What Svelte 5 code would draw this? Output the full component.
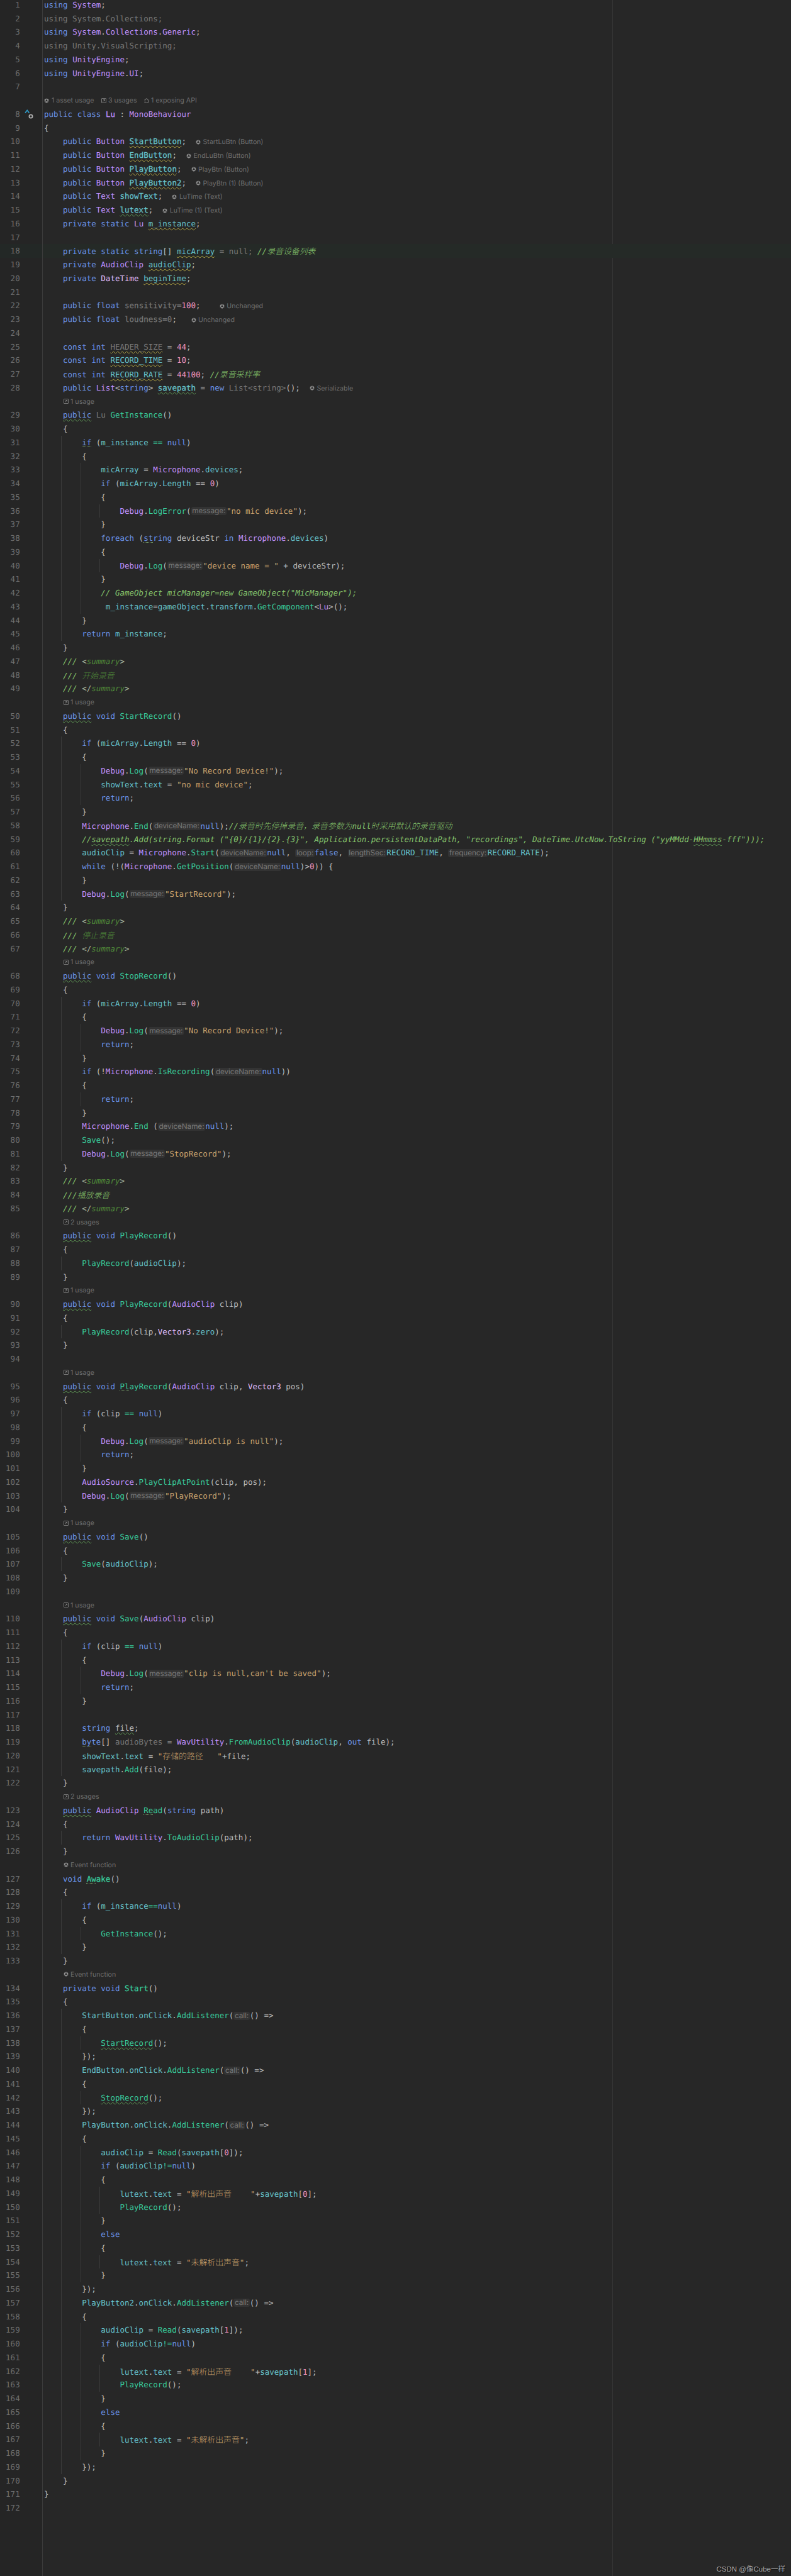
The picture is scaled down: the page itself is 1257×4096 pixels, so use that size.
<script>
  const src = [
`«k:using» «t:System»;`,
`«x:using System.Collections;»`,
`«k:using» «t:System».«t:Collections».«t:Generic»;`,
`«x:using Unity.VisualScripting;»`,
`«k:using» «t:UnityEngine»;`,
`«k:using» «t:UnityEngine».«t:UI»;`,
``,
`@0 u:1 asset usage|r:3 usages|a:1 exposing API`,
`«k:public» «k:class» «t.b:Lu» : «t:MonoBehaviour»`,
`{`,
`    «k:public» «t:Button» «f.b.w:StartButton»;  «u:StartLuBtn (Button)»`,
`    «k:public» «t:Button» «f.b.w:EndButton»;  «u:EndLuBtn (Button)»`,
`    «k:public» «t:Button» «f.b.w:PlayButton»;  «u:PlayBtn (Button)»`,
`    «k:public» «t:Button» «f.b.w:PlayButton2»;  «u:PlayBtn (1) (Button)»`,
`    «k:public» «t:Text» «f.b:showText»;  «u:LuTime (Text)»`,
`    «k:public» «t:Text» «f.b.g:lutext»;  «u:LuTime (1) (Text)»`,
`    «k:private» «k:static» «t:Lu» «f.w:m_instance»;`,
``,
`    «k:private» «k:static» «k:string»[] «f.w:micArray» «x:= null;» «c://录音设备列表»`,
`    «k:private» «t:AudioClip» «f.w:audioClip»;`,
`    «k:private» «T:DateTime» «f.w:beginTime»;`,
``,
`    «k:public» «k:float» «x.b:sensitivity=»«n:100»;    «u:Unchanged»`,
`    «k:public» «k:float» «x.b:loudness=»«x:0»;   «u:Unchanged»`,
``,
`    «k:const» «k:int» «x.w:HEADER_SIZE» = «n:44»;`,
`    «k:const» «k:int» «f.w:RECORD_TIME» = «n:10»;`,
`    «k:const» «k:int» «f.w:RECORD_RATE» = «n:44100»; «c://录音采样率»`,
`    «k:public» «t:List»<«k:string»> «f.b.g:savepath» = «k:new» «x:List<string>»();  «u:Serializable»`,
`@1 r:1 usage`,
`    «k.g:public» «x:Lu» «m:GetInstance»()`,
`    {`,
`        «k.d:if» («f:m_instance» «m:==» «k:null»)`,
`        {`,
`            «f:micArray» = «t:Microphone».«f:devices»;`,
`            «k:if» («f:micArray».«f:Length» == «n:0»)`,
`            {`,
`                «t:Debug».«m:LogError»(«h:message:»«s:"no mic device"»);`,
`            }`,
`            «k:foreach» («k.d:st»«k:ring» deviceStr «k:in» «t:Microphone».«f:devices»)`,
`            {`,
`                «t:Debug».«m:Log»(«h:message:»«s:"device name = "» + deviceStr);`,
`            }`,
`            «c:// GameObject micManager=new GameObject("MicManager");»`,
`             «f:m_instance»=«f:gameObject».«f:transform».«m:GetComponent»<«t:Lu»>();`,
`        }`,
`        «k:return» «f:m_instance»;`,
`    }`,
`    «c:///» «dl:<»«dt:summary»«dl:>»`,
`    «c:///» «dt:开始录音»`,
`    «c:///» «dl:</»«dt:summary»«dl:>»`,
`@1 r:1 usage`,
`    «k.g:public» «k:void» «m:StartRecord»()`,
`    {`,
`        «k:if» («f:micArray».«f:Length» == «n:0»)`,
`        {`,
`            «t:Debug».«m:Log»(«h:message:»«s:"No Record Device!"»);`,
`            «f:showText».«f:text» = «s:"no mic device"»;`,
`            «k:return»;`,
`        }`,
`        «t:Microphone».«m:End»(«h:deviceName:»«k:null»);«c://录音时先停掉录音，录音参数为null时采用默认的录音驱动»`,
`        «c://»«c.g:savepath»«c:.Add(string.Format ("{0}/{1}/{2}.{3}", Application.persistentDataPath, "recordings", DateTime.UtcNow.ToString ("yyMMdd-»«c.g:HHmmss»«c:-fff")));»`,
`        «f:audioClip» = «t:Microphone».«m:Start»(«h:deviceName:»«k:null», «h:loop:»«k:false», «h:lengthSec:»«f:RECORD_TIME», «h:frequency:»«f:RECORD_RATE»);`,
`        «k:while» (!(«t:Microphone».«m:GetPosition»(«h:deviceName:»«k:null»)>«n:0»)) {`,
`        }`,
`        «t:Debug».«m:Log»(«h:message:»«s:"StartRecord"»);`,
`    }`,
`    «c:///» «dl:<»«dt:summary»«dl:>»`,
`    «c:///» «dt:停止录音»`,
`    «c:///» «dl:</»«dt:summary»«dl:>»`,
`@1 r:1 usage`,
`    «k.g:public» «k:void» «m:StopRecord»()`,
`    {`,
`        «k:if» («f:micArray».«f:Length» == «n:0»)`,
`        {`,
`            «t:Debug».«m:Log»(«h:message:»«s:"No Record Device!"»);`,
`            «k:return»;`,
`        }`,
`        «k:if» (!«t:Microphone».«m:IsRecording»(«h:deviceName:»«k:null»))`,
`        {`,
`            «k:return»;`,
`        }`,
`        «t:Microphone».«m:End» («h:deviceName:»«k:null»);`,
`        «m:Save»();`,
`        «t:Debug».«m:Log»(«h:message:»«s:"StopRecord"»);`,
`    }`,
`    «c:///» «dl:<»«dt:summary»«dl:>»`,
`    «c:///播放录音»`,
`    «c:///» «dl:</»«dt:summary»«dl:>»`,
`@1 r:2 usages`,
`    «k.g:public» «k:void» «m:PlayRecord»()`,
`    {`,
`        «m:PlayRecord»(«f:audioClip»);`,
`    }`,
`@1 r:1 usage`,
`    «k.g:public» «k:void» «m:PlayRecord»(«t:AudioClip» clip)`,
`    {`,
`        «m:PlayRecord»(clip,«T:Vector3».«f:zero»);`,
`    }`,
``,
`@1 r:1 usage`,
`    «k.g:public» «k:void» «m.d:Pl»«m:ayRecord»(«t:AudioClip» clip, «T:Vector3» pos)`,
`    {`,
`        «k:if» (clip «m:==» «k:null»)`,
`        {`,
`            «t:Debug».«m:Log»(«h:message:»«s:"audioClip is null"»);`,
`            «k:return»;`,
`        }`,
`        «t:AudioSource».«m:PlayClipAtPoint»(clip, pos);`,
`        «t:Debug».«m:Log»(«h:message:»«s:"PlayRecord"»);`,
`    }`,
`@1 r:1 usage`,
`    «k.g:public» «k:void» «m:Save»()`,
`    {`,
`        «m:Save»(«f:audioClip»);`,
`    }`,
``,
`@1 r:1 usage`,
`    «k.g:public» «k:void» «m:Save»(«t:AudioClip» clip)`,
`    {`,
`        «k:if» (clip «m:==» «k:null»)`,
`        {`,
`            «t:Debug».«m:Log»(«h:message:»«s:"clip is null,can't be saved"»);`,
`            «k:return»;`,
`        }`,
``,
`        «k:string» «pl.g:file»;`,
`        «k.d:by»«k:te»[] «x:audioBytes» = «t:WavUtility».«m:FromAudioClip»(«f:audioClip», «k:out» file);`,
`        «f:showText».«f:text» = «s:"存储的路径   "»+file;`,
`        «f:savepath».«m:Add»(file);`,
`    }`,
`@1 r:2 usages`,
`    «k.g:public» «t:AudioClip» «m.d:Re»«m:ad»(«k:string» path)`,
`    {`,
`        «k:return» «t:WavUtility».«m:ToAudioClip»(path);`,
`    }`,
`@1 u:Event function`,
`    «k:void» «m.b.d:Aw»«m.b:ake»()`,
`    {`,
`        «k:if» («f:m_instance»«m:==»«k:null»)`,
`        {`,
`            «m:GetInstance»();`,
`        }`,
`    }`,
`@1 u:Event function`,
`    «k:private» «k:void» «m.b:Start»()`,
`    {`,
`        «f:StartButton».«f:onClick».«m:AddListener»(«h:call:»() =>`,
`        {`,
`            «m.g:StartRecord»();`,
`        });`,
`        «f:EndButton».«f:onClick».«m:AddListener»(«h:call:»() =>`,
`        {`,
`            «m.g:StopRecord»();`,
`        });`,
`        «f:PlayButton».«f:onClick».«m:AddListener»(«h:call:»() =>`,
`        {`,
`            «f:audioClip» = «m:Read»(«f:savepath»[«n:0»]);`,
`            «k:if» («f:audioClip»«m:!=»«k:null»)`,
`            {`,
`                «f:lutext».«f:text» = «s:"解析出声音    "»+«f:savepath»[«n:0»];`,
`                «m:PlayRecord»();`,
`            }`,
`            «k:else»`,
`            {`,
`                «f:lutext».«f:text» = «s:"未解析出声音"»;`,
`            }`,
`        });`,
`        «f:PlayButton2».«f:onClick».«m:AddListener»(«h:call:»() =>`,
`        {`,
`            «f:audioClip» = «m:Read»(«f:savepath»[«n:1»]);`,
`            «k:if» («f:audioClip»«m:!=»«k:null»)`,
`            {`,
`                «f:lutext».«f:text» = «s:"解析出声音    "»+«f:savepath»[«n:1»];`,
`                «m:PlayRecord»();`,
`            }`,
`            «k:else»`,
`            {`,
`                «f:lutext».«f:text» = «s:"未解析出声音"»;`,
`            }`,
`        });`,
`    }`,
`}`,
``
  ];

  function parse(s) {
    const out = [];
    const re = /«([\w.]+):([^»]*)»/g;
    let last = 0, m;
    while ((m = re.exec(s))) {
      if (m.index > last) out.push({ cls: '', text: s.slice(last, m.index) });
      out.push({ cls: m[1].replace(/\./g, ' '), text: m[2] });
      last = m.index + m[0].length;
    }
    if (last < s.length) out.push({ cls: '', text: s.slice(last) });
    return out.map((t) => ({ ...t, segs: t.text.split(/([\u4e00-\u9fff，]+)/).filter(Boolean) }));
  }
  const isCjk = (x) => /[\u4e00-\u9fff，]/.test(x);

  const guideLeft = (i) => 67.3 + 30.1 * i;

  let num = 0, depth = 0;
  const rows = src.map((s) => {
    if (s.startsWith('@')) {
      const items = s.slice(3).split('|').map((x) => ({ kind: x[0], text: x.slice(2) }));
      return { cv: true, level: +s[1], items, guides: [] };
    }
    num++;
    const toks = parse(s);
    const plain = toks.filter((t) => !t.cls).map((t) => t.text).join('');
    const lead = (plain.match(/^\s*\}/) ? 1 : 0);
    const d = depth - lead;
    depth += (plain.match(/\{/g) || []).length - (plain.match(/\}/g) || []).length;
    const guides = [];
    for (let i = 1; i < d; i++) guides.push(i);
    return { n: num, toks, guides };
  });
</script>

{#snippet unity()}<svg class="ic" viewBox="0 0 16 16"><path d="M8 .5 14.5 4.2V11.8L8 15.5 1.5 11.8V4.2Z" fill="#8f8f8f" /><path d="M8 8V0M8 8 15 12M8 8 1 12" stroke="#272727" stroke-width="1.5" fill="none" /><circle cx="8" cy="8" r="2.7" fill="#272727" /></svg>{/snippet}

{#snippet usage()}<svg class="ic" viewBox="0 0 16 16"><rect x="1" y="1" width="14" height="14" rx="1" fill="none" stroke="#8a8a8a" stroke-width="1.6" /><path d="M5 11 11 5M6.5 5H11V9.5" fill="none" stroke="#8a8a8a" stroke-width="1.6" /></svg>{/snippet}

{#snippet api()}<svg class="ic" viewBox="0 0 16 16"><path d="M2 4.5H5.5a2.3 2.3 0 1 1 4 0H12.5V8a2.2 2.2 0 1 1 0 4V15H2V11.5a2.2 2.2 0 0 0 0-4Z" fill="none" stroke="#8a8a8a" stroke-width="1.5" /></svg>{/snippet}

<div class="editor">
  <div class="margin"></div>
  <div class="rows">
    {#each rows as row}
      <div class="row" class:current={row.n === 18}>
        <div class="gut">{#if row.n}<span class="num">{row.n}</span>{/if}{#if row.n === 8}<svg class="mark" viewBox="0 0 16 16" width="16" height="16"><path d="M2 6.5 5.2 2.5 8.4 6.5" fill="none" stroke="#2e9bc9" stroke-width="1.8" /><circle cx="11" cy="12" r="2.6" fill="none" stroke="#afafaf" stroke-width="1.8" /></svg>{/if}</div>
        <div class="code">{#each row.guides as g}<i class="guide" style="left:{guideLeft(g)}px"></i>{/each}{#if row.cv}<div class="cv" style="padding-left:{row.level * 30.1 + 0.6}px">{#each row.items as it}<span class="cvi">{#if it.kind === 'u'}{@render unity()}{:else if it.kind === 'r'}{@render usage()}{:else}{@render api()}{/if}{it.text}</span>{/each}</div>{:else}{#each row.toks as t}{#if t.cls === 'h'}<span class="h">{t.text}</span>{:else if t.cls === 'u'}<span class="inl">{@render unity()}{t.text}</span>{:else}<span class={t.cls}>{#each t.segs as seg}{#if isCjk(seg)}<span class="cjk">{seg}</span>{:else}{seg}{/if}{/each}</span>{/if}{/each}{/if}</div>
      </div>
    {/each}
    <div class="row fill"><div class="gut"></div></div>
  </div>
  <div class="wm">CSDN @像Cube一样</div>
</div>

<style>
  :global(body) { margin: 0; background: #272727; }
  .editor {
    position: relative;
    width: 1257px;
    height: 4096px;
    overflow: hidden;
    background: #272727;
  }
  .margin {
    position: absolute;
    left: 972.5px;
    top: 0;
    bottom: 0;
    width: 1px;
    background: #353535;
  }
  .rows {
    height: 4099.2px;
    margin-top: -3.2px;
    display: flex;
    flex-direction: column;
    position: relative;
  }
  .row {
    display: flex;
    height: 21.76px;
    flex: none;
    line-height: 21.76px;
    font-family: "DejaVu Sans Mono", "Noto Sans CJK SC", monospace;
    font-size: 12.52px;
    text-rendering: geometricPrecision;
    color: #bdbdbd;
    white-space: pre;
  }
  .row.fill { flex: 1; }
  .row.current { background: #252a27; }
  .gut {
    flex: none;
    width: 67px;
    height: 100%;
    background: #252525;
    border-right: 1px solid #3c3c3c;
    position: relative;
  }
  .current .gut { background: #232826; }
  .num {
    display: block;
    width: 31.7px;
    text-align: right;
    color: #6e6e6e;
  }
  .mark {
    position: absolute;
    left: 37.5px;
    top: 2.5px;
  }
  .code {
    flex: 1;
    padding-left: 1.9px;
  }
  .guide {
    position: absolute;
    width: 1px;
    height: 21.76px;
    background: #3a3a3a;
  }
  .cjk { font-size: 12.9px; font-weight: 300; font-family: "Noto Sans CJK SC", sans-serif; }
  .k { color: #6c95eb; }
  .t { color: #c191ff; }
  .T { color: #e1bfff; }
  .f { color: #66c3cc; }
  .m { color: #39cc9b; }
  .s { color: #c9a26d; }
  .n { color: #ed94c0; }
  .c { color: #85c46c; font-style: italic; }
  .dt { color: #4f8a3a; font-style: italic; }
  .dl { color: #a8b8a0; }
  .x { color: #787878; }
  .b { -webkit-text-stroke: 0.25px currentColor; }
  .w {
    text-decoration: underline wavy #b5a642 1px;
    text-underline-offset: 2px;
    text-decoration-skip-ink: none;
  }
  .g {
    text-decoration: underline wavy #5f9a55 1px;
    text-underline-offset: 2px;
    text-decoration-skip-ink: none;
  }
  .d {
    text-decoration: underline dotted #7fa96f 1px;
    text-underline-offset: 2px;
    text-decoration-skip-ink: none;
  }
  .h {
    display: inline-block;
    font-family: Inter, sans-serif;
    font-size: 11.8px;
    line-height: 13px;
    color: #787878;
    background: #333333;
    border-radius: 3px;
    padding: 0 1.7px;
    vertical-align: 0.5px;
    letter-spacing: -0.1px;
  }
  .cv {
    display: flex;
    gap: 11px;
    font-family: Inter, sans-serif;
    font-size: 10.6px;
    color: #6f6f6f;
  }
  .cvi, .inl {
    font-family: Inter, sans-serif;
    font-size: 10.6px;
    color: #6f6f6f;
  }
  .ic {
    display: inline-block;
    width: 8px;
    height: 8px;
    margin-right: 3.5px;
    vertical-align: -0.5px;
  }
  .wm {
    position: absolute;
    right: 9px;
    bottom: 4px;
    font-family: "Liberation Sans", "Noto Sans CJK SC", sans-serif;
    font-size: 11.5px;
    line-height: 14px;
    color: #a8a8a8;
    text-shadow: 1px 1px 1px #111;
  }
</style>
